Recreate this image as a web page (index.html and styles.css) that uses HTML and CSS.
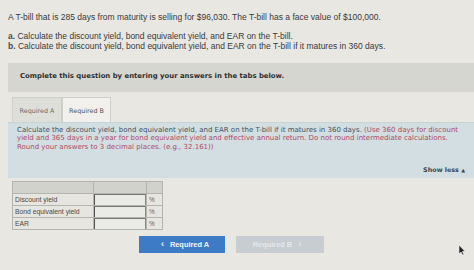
FILE: index.html
```html
<!DOCTYPE html>
<html>
<head>
<meta charset="utf-8">
<link rel="stylesheet" href="styles.css">
</head>
<body>
<div class="page">
  <p class="intro">A T-bill that is 285 days from maturity is selling for $96,030. The T-bill has a face value of $100,000.</p>
  <ol class="parts">
    <li><b>a.</b> Calculate the discount yield, bond equivalent yield, and EAR on the T-bill.</li>
    <li><b>b.</b> Calculate the discount yield, bond equivalent yield, and EAR on the T-bill if it matures in 360 days.</li>
  </ol>
  <div class="band">Complete this question by entering your answers in the tabs below.</div>
  <div class="tabs">
    <div class="tab">Required A</div>
    <div class="tab active">Required B</div>
  </div>
  <div class="panel">
    <p class="instr">Calculate the discount yield, bond equivalent yield, and EAR on the T-bill if it matures in 360 days. <span class="red">(Use 360 days for discount yield and 365 days in a year for bond equivalent yield and effective annual return. Do not round intermediate calculations. Round your answers to 3 decimal places. (e.g., 32.161))</span></p>
    <div class="showless">Show less <span class="tri">▲</span></div>
  </div>
  <table class="answers">
    <tr class="head"><td class="lbl"></td><td class="inp"></td><td class="pct"></td></tr>
    <tr><td class="lbl">Discount yield</td><td class="inp"><div class="box"></div></td><td class="pct">%</td></tr>
    <tr><td class="lbl">Bond equivalent yield</td><td class="inp"><div class="box"></div></td><td class="pct">%</td></tr>
    <tr><td class="lbl">EAR</td><td class="inp"><div class="box"></div></td><td class="pct">%</td></tr>
  </table>
  <div class="nav">
    <div class="btn prev"><span class="chev">‹</span> Required A</div>
    <div class="btn next">Required B <span class="chev">›</span></div>
  </div>
</div>
<svg class="cursor" width="8" height="12" viewBox="0 0 8 12"><path d="M1 1 L1 10 L3 8 L4.5 11 L5.8 10.4 L4.4 7.5 L7 7.5 Z" fill="#222" stroke="#eee" stroke-width="0.6"/></svg>
</body>
</html>
```

FILE: styles.css
```css
html, body {
  margin: 0;
  padding: 0;
  background: #e8e7e2;
  overflow: hidden;
  width: 474px;
  height: 270px;
}
body {
  position: relative;
  font-family: "Liberation Sans", Arial, sans-serif;
  color: #3b3b3b;
}
.page {
  padding: 12px 0 0 8px;
  width: 466px;
}
.intro {
  margin: 0;
  font-size: 8.5px;
  line-height: 10px;
  color: #3a3a3a;
  white-space: nowrap;
}
.parts {
  list-style: none;
  margin: 9px 0 0 0;
  padding: 0;
  font-size: 8.5px;
  line-height: 10px;
  color: #3a3a3a;
  white-space: nowrap;
}
.parts b {
  font-weight: bold;
  color: #4a4a4a;
}
.band {
  margin-top: 12px;
  height: 29px;
  box-sizing: border-box;
  padding: 9px 0 0 12px;
  background: #d6d6d0;
  font-family: "DejaVu Sans", Verdana, sans-serif;
  font-weight: bold;
  font-size: 6.9px;
  line-height: 9px;
  color: #2f2f2f;
}
.tabs {
  display: flex;
  padding: 5px 0 0 4px;
}
.tab {
  width: 50px;
  height: 25px;
  box-sizing: border-box;
  padding-top: 1px;
  border: 1px solid #cfcfca;
  border-bottom: none;
  background: #dfdfda;
  font-family: "DejaVu Sans", Verdana, sans-serif;
  font-size: 6.4px;
  color: #6a6a6a;
  display: flex;
  align-items: center;
  justify-content: center;
}
.tab.active {
  width: 49px;
  background: #f1f0ec;
  color: #555;
}
.panel {
  background: #d2dee2;
  height: 56px;
  box-sizing: border-box;
  padding: 3px 0 0 9px;
  border-top: 1px solid #c7d3d7;
}
.instr {
  margin: 0;
  width: 452px;
  font-family: "DejaVu Sans", Verdana, sans-serif;
  font-size: 7px;
  line-height: 8.4px;
  color: #45515c;
}
.red {
  color: #b04a62;
}
.showless {
  margin: 15px 0 0 0;
  width: 448px;
  text-align: right;
  font-family: "DejaVu Sans", Verdana, sans-serif;
  font-weight: bold;
  font-size: 6.4px;
  color: #3a4750;
}
.tri {
  font-size: 5px;
}
.answers {
  margin: 3px 0 0 4px;
  border-collapse: collapse;
  font-size: 6.8px;
  color: #4a4a4a;
}
.answers td {
  border: 1px solid #b5b5b0;
  height: 12px;
  padding: 0;
  box-sizing: border-box;
}
.answers .head td {
  background: #d2d2cd;
}
.lbl {
  width: 81px;
  padding-left: 2px !important;
  background: #e6e5e0;
}
.inp {
  width: 53px;
  background: #e6e5e0;
}
.box {
  height: 11px;
  box-sizing: border-box;
  border-left: 1px solid #555;
  border-top: 1px solid #777;
  border-right: 1px solid #888;
  background: #eaeae6;
}
.pct {
  width: 16px;
  padding-left: 2px !important;
  background: #e6e5e0;
  font-size: 6.4px;
  color: #666;
}
.nav {
  display: flex;
  gap: 11px;
  margin: 6px 0 0 131px;
}
.btn {
  height: 17px;
  box-sizing: border-box;
  display: flex;
  align-items: center;
  justify-content: center;
  font-family: "Liberation Sans", Arial, sans-serif;
  font-weight: bold;
  font-size: 7.4px;
}
.prev {
  width: 86px;
  background: #3e7bc6;
  color: #f4f7fb;
}
.next {
  width: 88px;
  background: #c7cdd1;
  color: #e3e7ea;
}
.chev {
  font-size: 9px;
  margin: 0 6px;
  line-height: 1;
}
.cursor {
  position: absolute;
  left: 458px;
  top: 244px;
}
```
